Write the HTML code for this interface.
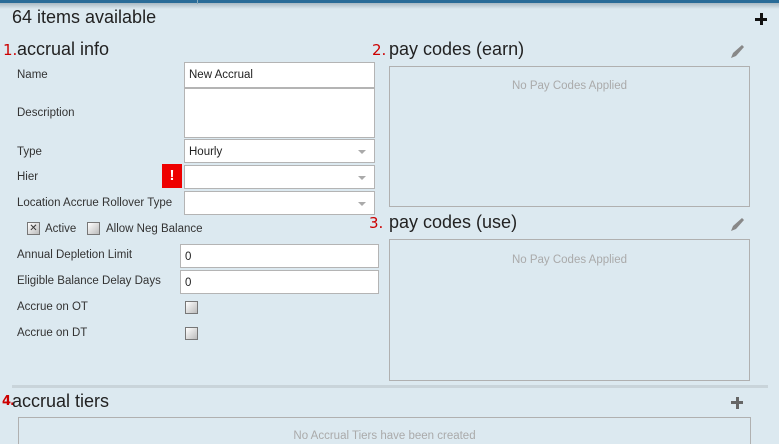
<!DOCTYPE html>
<html><head><style>
*{margin:0;padding:0;box-sizing:border-box}
html,body{width:779px;height:444px;overflow:hidden}
body{background:#dce9f0;position:relative;font-family:"Liberation Sans","DejaVu Sans",sans-serif}
.a{position:absolute}
.topbar{left:0;top:0;width:779px;height:3px;background:#2a6c98}
.shade{left:0;top:3px;width:779px;height:6px;background:linear-gradient(#a9b9c3,#dce9f0)}
.h{font-family:"Liberation Sans",sans-serif;font-size:18px;color:#222}
.n{font-family:"DejaVu Sans",sans-serif;font-size:15px;color:#c00}
.l{font-size:11.5px;color:#333;margin-top:1px}
.in{background:#fff;border:1px solid #b4b4b4;font-size:11.5px;color:#222;padding:6px 0 0 4px}
.dd::after{content:"";position:absolute;right:8px;top:10px;border-left:4px solid transparent;border-right:4px solid transparent;border-top:4px solid #aaa}
.cb{width:13px;height:13px;border:1px solid #777;background:linear-gradient(135deg,#fff,#bbb)}
.box{border:1px solid #b0b0b0}
.ph{font-size:11.5px;color:#aaa;text-align:center;width:100%}
</style></head><body>
<div class="a topbar"></div><div class="a shade"></div>
<div class="a" style="left:197px;top:0;width:1px;height:4px;background:#8ab"></div>
<div class="a h" style="left:12px;top:7px;font-size:18px">64 items available</div>
<div class="a" style="left:755px;top:18px;width:12px;height:3px;background:#111"></div>
<div class="a" style="left:760px;top:13px;width:3px;height:12px;background:#111"></div>

<div class="a n" style="left:3px;top:41px">1.</div>
<div class="a h" style="left:17px;top:39px">accrual info</div>
<div class="a l" style="left:17px;top:68px">Name</div>
<div class="a in" style="left:184px;top:62px;width:191px;height:26px">New Accrual</div>
<div class="a l" style="left:17px;top:106px">Description</div>
<div class="a in" style="left:184px;top:88px;width:191px;height:50px"></div>
<div class="a l" style="left:17px;top:145px">Type</div>
<div class="a in dd" style="left:184px;top:139px;width:191px;height:24px">Hourly</div>
<div class="a l" style="left:17px;top:170px">Hier</div>
<div class="a" style="left:162px;top:164px;width:20px;height:24px;background:#e00;color:#fff;font-weight:bold;font-size:15px;text-align:center;line-height:24px">!</div>
<div class="a in dd" style="left:184px;top:165px;width:191px;height:24px"></div>
<div class="a l" style="left:17px;top:196px">Location Accrue Rollover Type</div>
<div class="a in dd" style="left:184px;top:191px;width:191px;height:24px"></div>
<div class="a cb" style="left:27px;top:222px;text-align:center;font-size:10px;line-height:11px;color:#333">✕</div>
<div class="a l" style="left:45px;top:222px">Active</div>
<div class="a cb" style="left:87px;top:222px"></div>
<div class="a l" style="left:106px;top:222px">Allow Neg Balance</div>
<div class="a l" style="left:17px;top:248px">Annual Depletion Limit</div>
<div class="a in" style="left:180px;top:244px;width:199px;height:24px">0</div>
<div class="a l" style="left:17px;top:274px">Eligible Balance Delay Days</div>
<div class="a in" style="left:180px;top:270px;width:199px;height:24px">0</div>
<div class="a l" style="left:17px;top:300px">Accrue on OT</div>
<div class="a cb" style="left:185px;top:301px"></div>
<div class="a l" style="left:17px;top:326px">Accrue on DT</div>
<div class="a cb" style="left:185px;top:327px"></div>

<div class="a n" style="left:372px;top:41px">2.</div>
<div class="a h" style="left:389px;top:39px">pay codes (earn)</div>
<svg class="a" style="left:729px;top:43px" width="17" height="17"><path d="M2 15 L4 10 L13 2 L15 4 L7 13 Z" fill="#888"/></svg>
<div class="a box" style="left:389px;top:66px;width:361px;height:141px"><div class="ph" style="margin-top:13px">No Pay Codes Applied</div></div>
<div class="a n" style="left:369px;top:214px">3.</div>
<div class="a h" style="left:389px;top:212px">pay codes (use)</div>
<svg class="a" style="left:729px;top:216px" width="17" height="17"><path d="M2 15 L4 10 L13 2 L15 4 L7 13 Z" fill="#888"/></svg>
<div class="a box" style="left:389px;top:239px;width:361px;height:142px"><div class="ph" style="margin-top:14px">No Pay Codes Applied</div></div>

<div class="a" style="left:12px;top:385px;width:756px;height:3px;background:#c9d4da"></div>
<div class="a n" style="left:2px;top:394px;font-size:13px;font-weight:bold;letter-spacing:-1px">4.</div>
<div class="a h" style="left:12px;top:391px">accrual tiers</div>
<div class="a" style="left:731px;top:401px;width:12px;height:3px;background:#666"></div>
<div class="a" style="left:735.5px;top:397px;width:3px;height:12px;background:#666"></div>
<div class="a box" style="left:18px;top:417px;width:733px;height:40px"><div class="ph" style="margin-top:12px">No Accrual Tiers have been created</div></div>
</body></html>
